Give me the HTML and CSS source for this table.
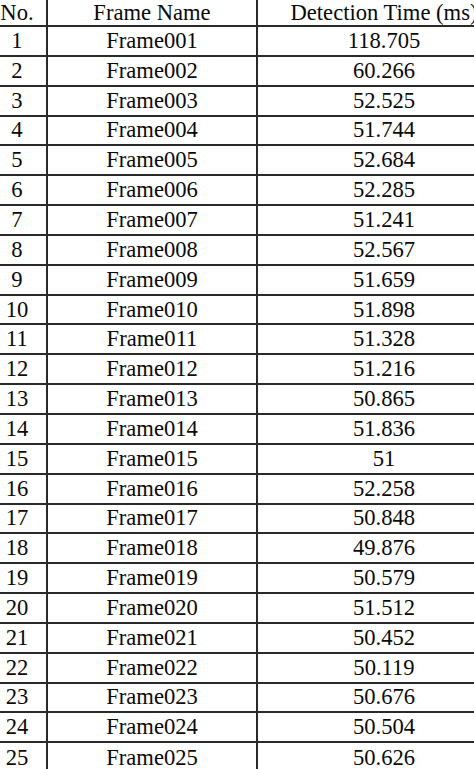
FILE: index.html
```html
<!DOCTYPE html>
<html>
<head>
<meta charset="utf-8">
<link rel="stylesheet" href="styles.css">
</head>
<body>
<div class="table">
  <div class="row head"><div class="c no">No.</div><div class="c name">Frame Name</div><div class="c time">Detection Time (ms)</div></div>
  <div class="row"><div class="c no">1</div><div class="c name">Frame001</div><div class="c time">118.705</div></div>
  <div class="row"><div class="c no">2</div><div class="c name">Frame002</div><div class="c time">60.266</div></div>
  <div class="row"><div class="c no">3</div><div class="c name">Frame003</div><div class="c time">52.525</div></div>
  <div class="row"><div class="c no">4</div><div class="c name">Frame004</div><div class="c time">51.744</div></div>
  <div class="row"><div class="c no">5</div><div class="c name">Frame005</div><div class="c time">52.684</div></div>
  <div class="row"><div class="c no">6</div><div class="c name">Frame006</div><div class="c time">52.285</div></div>
  <div class="row"><div class="c no">7</div><div class="c name">Frame007</div><div class="c time">51.241</div></div>
  <div class="row"><div class="c no">8</div><div class="c name">Frame008</div><div class="c time">52.567</div></div>
  <div class="row"><div class="c no">9</div><div class="c name">Frame009</div><div class="c time">51.659</div></div>
  <div class="row"><div class="c no">10</div><div class="c name">Frame010</div><div class="c time">51.898</div></div>
  <div class="row"><div class="c no">11</div><div class="c name">Frame011</div><div class="c time">51.328</div></div>
  <div class="row"><div class="c no">12</div><div class="c name">Frame012</div><div class="c time">51.216</div></div>
  <div class="row"><div class="c no">13</div><div class="c name">Frame013</div><div class="c time">50.865</div></div>
  <div class="row"><div class="c no">14</div><div class="c name">Frame014</div><div class="c time">51.836</div></div>
  <div class="row"><div class="c no">15</div><div class="c name">Frame015</div><div class="c time">51</div></div>
  <div class="row"><div class="c no">16</div><div class="c name">Frame016</div><div class="c time">52.258</div></div>
  <div class="row"><div class="c no">17</div><div class="c name">Frame017</div><div class="c time">50.848</div></div>
  <div class="row"><div class="c no">18</div><div class="c name">Frame018</div><div class="c time">49.876</div></div>
  <div class="row"><div class="c no">19</div><div class="c name">Frame019</div><div class="c time">50.579</div></div>
  <div class="row"><div class="c no">20</div><div class="c name">Frame020</div><div class="c time">51.512</div></div>
  <div class="row"><div class="c no">21</div><div class="c name">Frame021</div><div class="c time">50.452</div></div>
  <div class="row"><div class="c no">22</div><div class="c name">Frame022</div><div class="c time">50.119</div></div>
  <div class="row"><div class="c no">23</div><div class="c name">Frame023</div><div class="c time">50.676</div></div>
  <div class="row"><div class="c no">24</div><div class="c name">Frame024</div><div class="c time">50.504</div></div>
  <div class="row last"><div class="c no">25</div><div class="c name">Frame025</div><div class="c time">50.626</div></div>
</div>
</body>
</html>
```
FILE: styles.css
```css
html, body {
  margin: 0;
  padding: 0;
  background: #ffffff;
}
body {
  width: 474px;
  height: 769px;
  overflow: hidden;
  font-family: "Liberation Serif", "Times New Roman", serif;
  font-size: 22.6px;
  color: #0a0a0a;
}
.table {
  width: 474px;
  overflow: hidden;
}
.row {
  display: grid;
  grid-template-columns: 48px 210px 250px;
  width: 508px;
  height: 29.85px;
  box-sizing: border-box;
  border-bottom: 2px solid #2a2a2a;
}
.row.head {
  height: 27px;
}
.row.last {
  border-bottom: none;
}
.c {
  display: flex;
  align-items: center;
  justify-content: center;
  white-space: nowrap;
  box-sizing: border-box;
}
.no {
  border-right: 2px solid #2a2a2a;
  padding-right: 12px;
}
.name {
  border-right: 2px solid #2a2a2a;
}
.time {
  padding-left: 2px;
}
```
